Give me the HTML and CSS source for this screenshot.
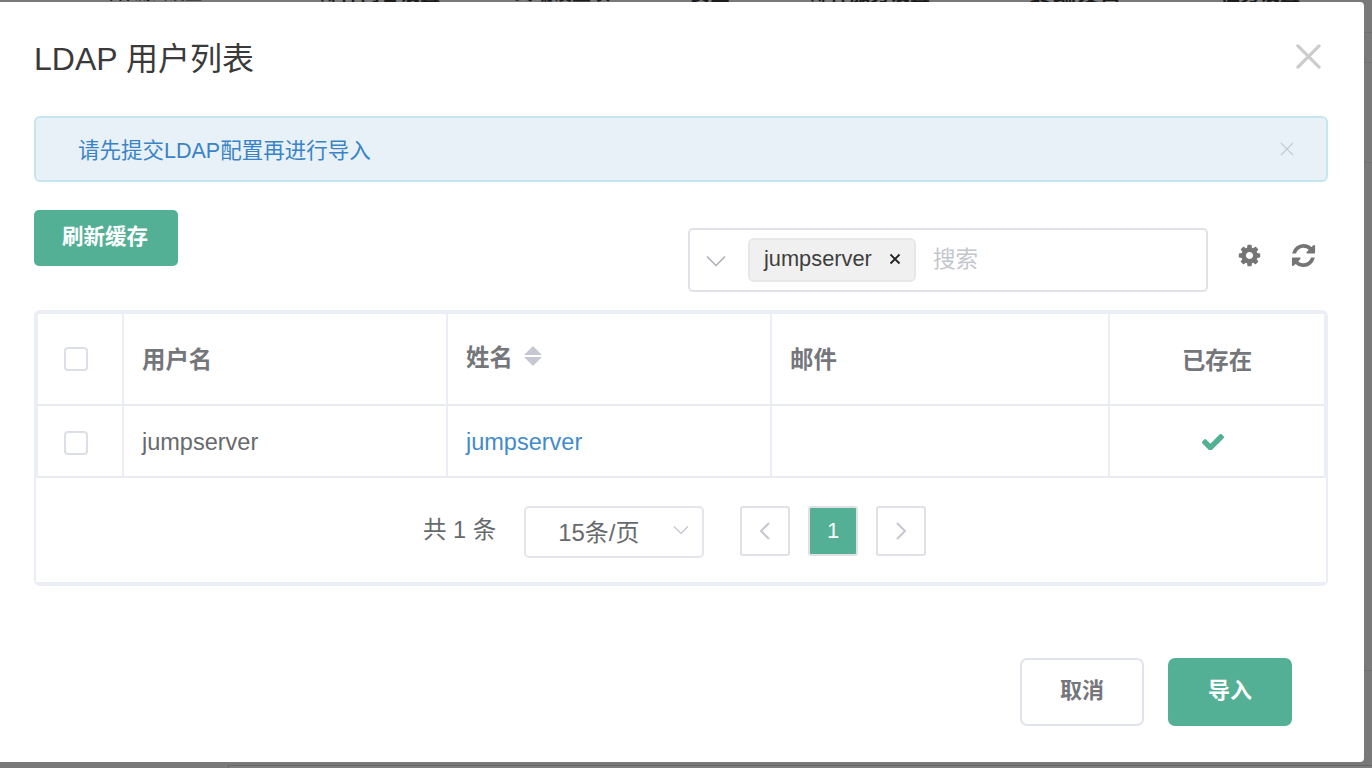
FILE: index.html
```html
<!DOCTYPE html>
<html lang="zh-CN">
<head>
<meta charset="utf-8">
<title>LDAP 用户列表</title>
<link rel="stylesheet" href="styles.css">
</head>
<body>
<div class="backdrop-tabs">
  <span class="bt bt1">邮件测试设置</span>
  <span class="bt bt2">邮件内容设置</span>
  <span class="bt bt3">终端设置项</span>
  <span class="bt bt4">安全</span>
  <span class="bt bt5">邮件服务设置</span>
  <span class="bt bt6">终端设置</span>
  <span class="bt bt7">任务设置</span>
</div>
<div class="backdrop-gutter"></div>
<div class="backdrop-panel"></div>
<main class="modal">
  <header class="modal-head">
    <h1 class="modal-title">LDAP 用户列表</h1>
    <svg class="modal-close" viewBox="0 0 26 26" aria-label="关闭"><path d="M2 2 24 24M24 2 2 24"/></svg>
  </header>

  <div class="alert">
    <span class="alert-text">请先提交LDAP配置再进行导入</span>
    <svg class="alert-close" viewBox="0 0 14 14"><path d="M1 1 13 13M13 1 1 13"/></svg>
  </div>

  <div class="toolbar">
    <button class="btn btn-primary btn-refresh">刷新缓存</button>
    <div class="tools">
      <div class="search">
        <svg class="search-chevron" viewBox="0 0 20 12"><path d="M1 1.5 10 10.5 19 1.5"/></svg>
        <span class="chip"><span class="chip-text">jumpserver</span><svg class="chip-x" viewBox="0 0 12 12"><path d="M1.5 1.5 10.5 10.5M10.5 1.5 1.5 10.5"/></svg></span>
        <span class="search-placeholder">搜索</span>
      </div>
      <svg class="tool-icon tool-gear" viewBox="0 0 1792 1792"><path d="M1152 896q0-106-75-181t-181-75-181 75-75 181 75 181 181 75 181-75 75-181zm512-109v222q0 12-8 23t-20 13l-185 28q-19 54-39 91 35 50 107 138 10 12 10 25t-9 23q-27 37-99 108t-94 71q-12 0-26-9l-138-108q-44 23-91 38-16 136-29 186-7 28-36 28h-222q-14 0-24.5-8.5t-11.5-21.5l-28-184q-49-16-90-37l-141 107q-10 9-25 9-14 0-25-11-126-114-165-168-7-10-7-23 0-12 8-23 15-21 51-66.5t54-70.5q-27-50-41-99l-183-27q-13-2-21-12.5t-8-23.5v-222q0-12 8-23t19-13l186-28q14-46 39-92-40-57-107-138-10-12-10-24 0-10 9-23 26-36 98.5-107.5t94.5-71.5q13 0 26 10l138 107q44-23 91-38 16-136 29-186 7-28 36-28h222q14 0 24.5 8.5t11.5 21.5l28 184q49 16 90 37l142-107q9-9 24-9 13 0 25 10 129 119 165 170 7 8 7 22 0 12-8 23-15 21-51 66.5t-54 70.5q26 50 41 98l183 28q13 2 21 12.5t8 23.5z"/></svg>
      <svg class="tool-icon tool-refresh" viewBox="0 0 1792 1792"><path d="M1639 1056q0 5-1 7-64 268-268 434.5t-478 166.5q-146 0-282.5-55t-243.5-157l-129 129q-19 19-45 19t-45-19-19-45v-448q0-26 19-45t45-19h448q26 0 45 19t19 45-19 45l-137 137q71 66 161 102t187 36q134 0 250-65t186-179q11-17 53-117 8-23 30-23h192q13 0 22.5 9.5t9.5 22.5zm25-800v448q0 26-19 45t-45 19h-448q-26 0-45-19t-19-45 19-45l138-138q-148-137-349-137-134 0-250 65t-186 179q-11 17-53 117-8 23-30 23h-199q-13 0-22.5-9.5t-9.5-22.5v-7q65-268 270-434.5t480-166.5q146 0 284 55.5t245 156.5l130-129q19-19 45-19t45 19 19 45z"/></svg>
    </div>
  </div>

  <section class="table-wrap">
    <table class="data-table">
      <colgroup>
        <col class="c1"><col class="c2"><col class="c3"><col class="c4"><col class="c5">
      </colgroup>
      <thead>
        <tr>
          <th class="cell-check"><span class="checkbox"></span></th>
          <th>用户名</th>
          <th class="th-sort"><span class="sort-label">姓名<svg class="sort-icon" viewBox="0 0 18 20"><path class="sort-up" d="M9 0 18 9H0Z"/><path class="sort-down" d="M0 11H18L9 20Z"/></svg></span></th>
          <th>邮件</th>
          <th class="cell-center">已存在</th>
        </tr>
      </thead>
      <tbody>
        <tr>
          <td class="cell-check"><span class="checkbox checkbox-row"></span></td>
          <td>jumpserver</td>
          <td><a class="link">jumpserver</a></td>
          <td></td>
          <td class="cell-center"><svg class="check-icon" viewBox="130 350 1541 1100"><path d="M1671 566q0 40-28 68l-724 724-136 136q-28 28-68 28t-68-28l-136-136-362-362q-28-28-28-68t28-68l136-136q28-28 68-28t68 28l294 295 656-657q28-28 68-28t68 28l136 136q28 28 28 68z"/></svg></td>
        </tr>
      </tbody>
    </table>
    <div class="pager">
      <span class="pager-total">共 1 条</span>
      <div class="pager-size">
        <span class="pager-size-text">15条/页</span>
        <svg class="pager-chevron" viewBox="0 0 16 10"><path d="M1 1.5 8 8.5 15 1.5"/></svg>
      </div>
      <div class="pager-nav">
        <span class="page-btn"><svg class="page-arrow" viewBox="0 0 12 20"><path d="M10 2 2 10 10 18"/></svg></span>
        <span class="page-btn page-current">1</span>
        <span class="page-btn"><svg class="page-arrow" viewBox="0 0 12 20"><path d="M2 2 10 10 2 18"/></svg></span>
      </div>
    </div>
  </section>

  <footer class="modal-foot">
    <button class="btn btn-default btn-large">取消</button>
    <button class="btn btn-primary btn-large">导入</button>
  </footer>
</main>
</body>
</html>
```

FILE: styles.css
```css
* { box-sizing: border-box; }
html, body { height: 100%; }
body {
  margin: 0;
  height: 768px;
  overflow: hidden;
  position: relative;
  background: #797979;
  color: #676a6c;
  font-family: "Liberation Sans", "Noto Sans CJK SC", sans-serif;
}

/* dimmed page behind the dialog */
.backdrop-tabs { position: absolute; left: 0; top: 0; width: 100%; height: 2px; overflow: hidden; }
.bt { position: absolute; top: -17px; font-size: 17px; font-weight: 700; line-height: 22px; color: #1c1c1c; white-space: nowrap; }
.bt1 { left: 100px; }
.bt2 { left: 320px; font-size: 20px; }
.bt3 { left: 515px; font-size: 19px; }
.bt4 { left: 690px; font-size: 20px; }
.bt5 { left: 810px; font-size: 20px; }
.bt6 { left: 1030px; font-size: 23px; }
.bt7 { left: 1220px; font-size: 20px; }
.backdrop-gutter {
  position: absolute; right: 0; top: 0; width: 8px; height: 768px;
  background:
    linear-gradient(#707070, #707070) 0 32px / 100% 1px no-repeat,
    linear-gradient(#707070, #707070) 0 62px / 100% 1px no-repeat,
    linear-gradient(#707070, #707070) 0 162px / 100% 1px no-repeat,
    linear-gradient(#707070, #707070) 0 670px / 100% 1px no-repeat;
}
.backdrop-panel { position: absolute; left: 228px; right: 0; top: 765px; height: 3px; border-top: 1px solid #666; border-left: 1px solid #666; background: #7e7e7e; }

/* dialog */
.modal {
  position: relative;
  width: 1364px;
  height: 760px;
  margin-top: 2px;
  padding: 0 36px 0 34px;
  background: #fff;
  border-radius: 0 4px 4px 0;
  display: flex;
  flex-direction: column;
}
.modal-head { height: 114px; display: flex; align-items: center; justify-content: space-between; flex: none; padding-right: 7px; }
.modal-title { margin: 0; font-size: 32px; font-weight: 400; line-height: 40px; color: #3a3a3a; }
.modal-close { width: 25px; height: 25px; margin-top: -6px; fill: none; stroke: #cccccc; stroke-width: 3.4; stroke-linecap: round; }

.alert {
  flex: none;
  height: 66px;
  padding: 0 32px 0 42px;
  display: flex;
  align-items: center;
  justify-content: space-between;
  background: #e8f1f8;
  border: 2px solid #c5e6ef;
  border-radius: 6px;
}
.alert-text { font-size: 21.5px; color: #3a84c5; margin-top: -2px; }
.alert-close { width: 14px; height: 14px; fill: none; stroke: #c3cbd2; stroke-width: 1.2; }

.toolbar { flex: none; margin-top: 28px; height: 82px; display: flex; justify-content: space-between; align-items: flex-start; }
.tools { height: 82px; padding-right: 11px; display: flex; align-items: flex-end; }
.search {
  width: 520px;
  height: 64px;
  padding: 8px 0 0 16px;
  display: flex;
  align-items: flex-start;
  background: #fff;
  border: 2px solid #dfe1e6;
  border-radius: 5px;
}
.search-chevron { width: 20px; height: 12px; margin-top: 17px; fill: none; stroke: #a6aab2; stroke-width: 1.3; }
.chip {
  margin-left: 22px;
  width: 168px;
  height: 44px;
  padding-left: 14px;
  display: flex;
  align-items: center;
  background: #f0f0f0;
  border: 2px solid #e7e7e7;
  border-radius: 6px;
}
.chip-text { font-size: 21.8px; color: #3e3e3e; margin-top: -2px; }
.chip-x { width: 12px; height: 12px; margin-left: 17px; margin-top: -3px; fill: none; stroke: #222; stroke-width: 1.8; }
.search-placeholder { margin-left: 17px; font-size: 22.5px; line-height: 44px; color: #c4c6cc; }
.tool-icon { fill: #757575; flex: none; align-self: flex-start; }
.tool-gear { width: 25px; height: 25px; margin: 33px 0 0 29px; }
.tool-refresh { width: 27px; height: 27px; margin: 32px 0 0 28px; }

/* table */
.table-wrap { flex: none; margin-top: 18px; width: 1294px; height: 276px; border: 2px solid #eceef6; border-radius: 6px; }
.data-table { width: 100%; table-layout: fixed; border-collapse: separate; border-spacing: 0; border: 2px solid #eceef6; border-bottom: 0; }
.c1 { width: 86px; }
.c2, .c3 { width: 324px; }
.c4 { width: 338px; }
.data-table th, .data-table td { padding: 0 0 0 18px; text-align: left; border-right: 2px solid #eceef6; border-bottom: 2px solid #e9ebf1; color: #676a6c; }
.data-table tr > :last-child { border-right: 0; }
.data-table th { height: 92px; padding-bottom: 2px; font-size: 23.4px; font-weight: 700; color: #74767a; }
.data-table td { height: 72px; padding-top: 2px; font-size: 23.5px; font-weight: 400; }
.data-table .cell-check { padding: 0 0 0 26px; }
.data-table .cell-center { padding: 0; text-align: center; }
.checkbox { display: block; width: 24px; height: 24px; background: #fff; border: 2px solid #dcdfe6; border-radius: 4px; }
.checkbox-row { margin-top: 4px; }
.th-sort { vertical-align: middle; }
.sort-label { display: flex; align-items: center; margin-top: -4px; }
.sort-icon { width: 18px; height: 20px; margin-left: 11px; }
.sort-up, .sort-down { fill: #c5c8d3; }
.data-table .link { color: #428bca; }
.check-icon { display: block; width: 22px; height: 16px; margin: 2px 0 0 92px; fill: #54b095; }

.pager { height: 106px; border-bottom: 2px solid #eceef6; display: flex; align-items: flex-start; padding: 28px 0 0 387px; }
.pager-total { font-size: 23.5px; line-height: 48px; white-space: pre; }
.pager-size { margin-left: 28px; width: 180px; height: 52px; padding: 0 0 4px 32px; display: flex; align-items: center; border: 2px solid #e4e6eb; border-radius: 5px; }
.pager-size-text { font-size: 24px; }
.pager-chevron { width: 16px; height: 10px; margin: 0 0 0 33px; fill: none; stroke: #c0c4cc; stroke-width: 1.2; }
.pager-nav { margin-left: 36px; display: flex; gap: 18px; }
.page-btn { width: 50px; height: 50px; display: flex; align-items: center; justify-content: center; border: 2px solid #dfe1e7; border-radius: 3px; font-size: 22px; }
.page-current { background: #54b095; color: #fff; }
.page-arrow { width: 12px; height: 20px; fill: none; stroke: #c5c8d0; stroke-width: 2; }

/* buttons */
.btn { font-family: inherit; cursor: pointer; border-radius: 5px; border: 0; padding: 0 0 8px; font-weight: 700; }
.btn-primary { background: #54b095; color: #fff; }
.btn-refresh { width: 144px; height: 56px; padding-right: 2px; font-size: 21.5px; }
.modal-foot { flex: none; margin-top: 72px; padding-right: 36px; display: flex; justify-content: flex-end; gap: 24px; }
.btn-large { width: 124px; height: 68px; font-size: 22px; border-radius: 7px; }
.btn-default { background: #fff; color: #74767a; border: 2px solid #e0e3ea; }
```
